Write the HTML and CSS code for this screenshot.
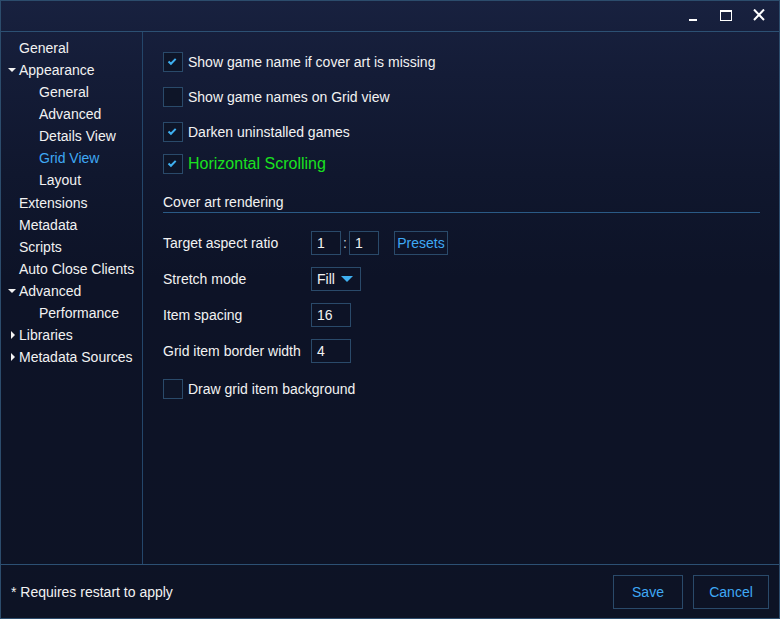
FILE: index.html
```html
<!DOCTYPE html>
<html>
<head>
<meta charset="utf-8">
<link rel="stylesheet" href="styles.css">
</head>
<body>
<div class="window">
  <div class="titlebar">
    <svg class="tb-icon" viewBox="0 0 12 12" width="12" height="12"><rect x="2" y="10" width="8" height="2" fill="#ffffff"/></svg>
    <svg class="tb-icon" viewBox="0 0 12 12" width="12" height="12"><rect x="0.5" y="1.5" width="11" height="10" fill="none" stroke="#ffffff" stroke-width="1"/><rect x="0" y="1" width="12" height="2" fill="#ffffff"/></svg>
    <svg class="tb-icon" viewBox="0 0 12 12" width="12" height="12"><path d="M1 0.5 L11 11 M11 0.5 L1 11" stroke="#ffffff" stroke-width="2" fill="none"/></svg>
  </div>
  <div class="main">
    <nav class="sidebar">
      <div class="nav-item lvl0">General</div>
      <div class="nav-item lvl0"><span class="arrow down"></span>Appearance</div>
      <div class="nav-item lvl1">General</div>
      <div class="nav-item lvl1">Advanced</div>
      <div class="nav-item lvl1">Details View</div>
      <div class="nav-item lvl1 selected">Grid View</div>
      <div class="nav-item lvl1">Layout</div>
      <div class="nav-item lvl0">Extensions</div>
      <div class="nav-item lvl0">Metadata</div>
      <div class="nav-item lvl0">Scripts</div>
      <div class="nav-item lvl0">Auto Close Clients</div>
      <div class="nav-item lvl0"><span class="arrow down"></span>Advanced</div>
      <div class="nav-item lvl1">Performance</div>
      <div class="nav-item lvl0"><span class="arrow right"></span>Libraries</div>
      <div class="nav-item lvl0"><span class="arrow right"></span>Metadata Sources</div>
    </nav>
    <section class="content">
      <div class="check-row first">
        <span class="checkbox"><svg viewBox="0 0 20 20" width="18" height="18"><path d="M5 9.5 L7.7 12 L13 6.5" stroke="#3fb0f0" stroke-width="2.2" fill="none"/></svg></span>
        <span class="check-label">Show game name if cover art is missing</span>
      </div>
      <div class="check-row">
        <span class="checkbox"></span>
        <span class="check-label">Show game names on Grid view</span>
      </div>
      <div class="check-row">
        <span class="checkbox"><svg viewBox="0 0 20 20" width="18" height="18"><path d="M5 9.5 L7.7 12 L13 6.5" stroke="#3fb0f0" stroke-width="2.2" fill="none"/></svg></span>
        <span class="check-label">Darken uninstalled games</span>
      </div>
      <div class="check-row big">
        <span class="checkbox"><svg viewBox="0 0 20 20" width="18" height="18"><path d="M5 9.5 L7.7 12 L13 6.5" stroke="#3fb0f0" stroke-width="2.2" fill="none"/></svg></span>
        <span class="check-label green">Horizontal Scrolling</span>
      </div>

      <div class="section-header">Cover art rendering</div>

      <div class="form-row">
        <span class="form-label">Target aspect ratio</span>
        <span class="input w30">1</span>
        <span class="colon">:</span>
        <span class="input w30">1</span>
        <span class="button presets">Presets</span>
      </div>
      <div class="form-row">
        <span class="form-label">Stretch mode</span>
        <span class="input combo">Fill<svg class="combo-arrow" viewBox="0 0 12 6" width="12" height="6"><path d="M0 0 L12 0 L6 6 Z" fill="#3fb0f0"/></svg></span>
      </div>
      <div class="form-row">
        <span class="form-label">Item spacing</span>
        <span class="input w40">16</span>
      </div>
      <div class="form-row">
        <span class="form-label">Grid item border width</span>
        <span class="input w40">4</span>
      </div>
      <div class="check-row after-form">
        <span class="checkbox"></span>
        <span class="check-label">Draw grid item background</span>
      </div>
    </section>
  </div>
  <div class="footer">
    <span class="footer-note">* Requires restart to apply</span>
    <div class="footer-buttons">
      <span class="button save">Save</span>
      <span class="button cancel">Cancel</span>
    </div>
  </div>
</div>
</body>
</html>
```

FILE: styles.css
```css
* { box-sizing: border-box; }
html, body {
  margin: 0;
  padding: 0;
  width: 780px;
  height: 619px;
  overflow: hidden;
  background: #0d1325;
}
body {
  font-family: "Liberation Sans", Arial, sans-serif;
  font-size: 14px;
  color: #f2f2f2;
}
.window {
  width: 780px;
  height: 619px;
  border: 1px solid #2c4c6c;
  display: flex;
  flex-direction: column;
  background: linear-gradient(to bottom, #18213f 0%, #141c37 12%, #10172e 28%, #0d1327 45%, #0d1325 100%);
}
.titlebar {
  height: 31px;
  flex: none;
  border-bottom: 1px solid #2c5073;
  display: flex;
  justify-content: flex-end;
  align-items: flex-start;
  padding: 8px 14px 0 0;
  gap: 21px;
}
.tb-icon { display: block; }
.main {
  flex: 1;
  display: flex;
  min-height: 0;
}
.sidebar {
  width: 142px;
  flex: none;
  border-right: 1px solid #24466a;
  padding-top: 5px;
}
.nav-item {
  height: 22.08px;
  line-height: 22px;
  white-space: nowrap;
  position: relative;
  color: #f2f2f2;
}
.nav-item.lvl0 { padding-left: 18px; }
.nav-item.lvl1 { padding-left: 38px; }
.nav-item.selected { color: #3fa9f5; }
.arrow {
  position: absolute;
  width: 0;
  height: 0;
}
.arrow.down {
  left: 7px;
  top: 9px;
  border-left: 4px solid transparent;
  border-right: 4px solid transparent;
  border-top: 4px solid #f2f2f2;
}
.arrow.right {
  left: 10px;
  top: 7px;
  border-top: 4px solid transparent;
  border-bottom: 4px solid transparent;
  border-left: 4px solid #f2f2f2;
}
.content {
  flex: 1;
  padding: 0 19px 0 20px;
}
.check-row {
  display: flex;
  align-items: center;
  height: 20px;
  margin-top: 15px;
}
.check-row.first { margin-top: 20px; }
.check-row.big { margin-top: 12px; }
.check-row.after-form { margin-top: 16px; }
.checkbox {
  width: 20px;
  height: 20px;
  flex: none;
  border: 1px solid #2a4a6a;
  background: #0e1528;
  display: flex;
  align-items: center;
  justify-content: center;
}
.checkbox svg { display: block; }
.check-label {
  margin-left: 5px;
  white-space: nowrap;
}
.check-label.green {
  color: #19e21f;
  font-size: 16px;
}
.section-header {
  margin-top: 20px;
  height: 19px;
  border-bottom: 1px solid #2a5a86;
  line-height: 16px;
}
.form-row {
  display: flex;
  align-items: center;
  height: 24px;
  margin-top: 12px;
}
.section-header + .form-row { margin-top: 18px; }
.form-label {
  width: 148px;
  flex: none;
  white-space: nowrap;
}
.input {
  height: 24px;
  border: 1px solid #2a4a6a;
  background: #0d1326;
  padding-left: 5px;
  line-height: 22px;
  display: flex;
  align-items: center;
}
.input.w30 { width: 30px; }
.input.w40 { width: 40px; }
.input.combo { width: 50px; }
.combo-arrow { margin-left: 6px; display: block; }
.colon {
  width: 8px;
  text-align: center;
  color: #c8ccd4;
}
.button {
  display: flex;
  align-items: center;
  justify-content: center;
  border: 1px solid #2a4a6a;
  color: #3fa9f5;
}
.presets {
  margin-left: 15px;
  width: 54px;
  height: 24px;
}
.footer {
  height: 54px;
  flex: none;
  border-top: 1px solid #2c5073;
  display: flex;
  align-items: flex-start;
  justify-content: space-between;
  padding: 10px 10px 0 10px;
}
.footer-note {
  line-height: 16px;
  margin-top: 9px;
}
.footer-buttons {
  display: flex;
  gap: 10px;
}
.save { width: 70px; height: 34px; }
.cancel { width: 76px; height: 34px; }
```
